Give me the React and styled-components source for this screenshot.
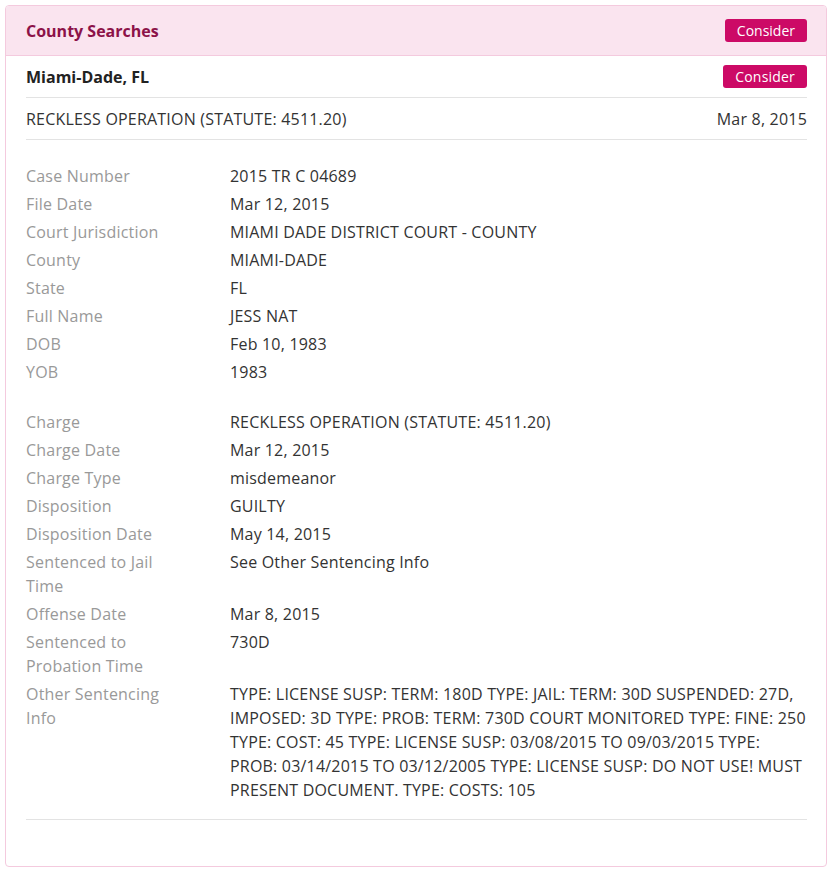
import React from "react";
import styled, { createGlobalStyle } from "styled-components";

const GlobalStyle = createGlobalStyle`
  body {
    margin: 0;
    padding: 5px;
    background: #fff;
    font-family: "Open Sans", "Noto Sans", sans-serif;
    color: #333;
  }
  * { box-sizing: border-box; }
`;

const general = [
  ["Case Number", "2015 TR C 04689"],
  ["File Date", "Mar 12, 2015"],
  ["Court Jurisdiction", "MIAMI DADE DISTRICT COURT - COUNTY"],
  ["County", "MIAMI-DADE"],
  ["State", "FL"],
  ["Full Name", "JESS NAT"],
  ["DOB", "Feb 10, 1983"],
  ["YOB", "1983"],
];

const charge = [
  ["Charge", "RECKLESS OPERATION (STATUTE: 4511.20)"],
  ["Charge Date", "Mar 12, 2015"],
  ["Charge Type", "misdemeanor"],
  ["Disposition", "GUILTY"],
  ["Disposition Date", "May 14, 2015"],
  ["Sentenced to Jail Time", "See Other Sentencing Info"],
  ["Offense Date", "Mar 8, 2015"],
  ["Sentenced to Probation Time", "730D"],
  [
    "Other Sentencing Info",
    "TYPE: LICENSE SUSP: TERM: 180D TYPE: JAIL: TERM: 30D SUSPENDED: 27D, IMPOSED: 3D TYPE: PROB: TERM: 730D COURT MONITORED TYPE: FINE: 250 TYPE: COST: 45 TYPE: LICENSE SUSP: 03/08/2015 TO 09/03/2015 TYPE: PROB: 03/14/2015 TO 03/12/2005 TYPE: LICENSE SUSP: DO NOT USE! MUST PRESENT DOCUMENT. TYPE: COSTS: 105",
  ],
];

const App = () => {
  return (
    <>
      <GlobalStyle />
      <Card>
        <Header>
          <Title>County Searches</Title>
          <Badge>Consider</Badge>
        </Header>
        <Body>
          <Row>
            <County>Miami-Dade, FL</County>
            <Badge>Consider</Badge>
          </Row>
          <Row>
            <span>RECKLESS OPERATION (STATUTE: 4511.20)</span>
            <span>Mar 8, 2015</span>
          </Row>
          <Details>
            <Group>
              {general.map(([k, v]) => (
                <Item key={k}>
                  <Label>{k}</Label>
                  <Value>{v}</Value>
                </Item>
              ))}
            </Group>
            <Group>
              {charge.map(([k, v]) => (
                <Item key={k}>
                  <Label>{k}</Label>
                  <Value>{v}</Value>
                </Item>
              ))}
            </Group>
          </Details>
        </Body>
      </Card>
    </>
  );
};

export default App;

const Card = styled.div`
  width: 822px;
  height: 862px;
  border: 1px solid #f4cade;
  border-radius: 4px;
  overflow: hidden;
  background: #fff;
`;

const Header = styled.div`
  height: 50px;
  display: flex;
  align-items: center;
  justify-content: space-between;
  padding: 0 19px 0 20px;
  background: #fae4ef;
  border-bottom: 1px solid #f4cade;
`;

const Title = styled.h2`
  margin: 0;
  font-size: 16px;
  font-weight: 700;
  color: #8c1248;
`;

const Badge = styled.span`
  display: inline-flex;
  align-items: center;
  height: 23px;
  padding: 0 12px;
  border-radius: 3px;
  background: #cc0a66;
  color: #fff;
  font-size: 14px;
`;

const Body = styled.div`
  padding: 0 19px 0 20px;
`;

const Row = styled.div`
  height: 42px;
  display: flex;
  align-items: center;
  justify-content: space-between;
  border-bottom: 1px solid #e3e3e3;
  font-size: 16px;
  letter-spacing: 0.2px;
  color: #333;
`;

const County = styled.span`
  font-weight: 700;
  letter-spacing: 0;
  color: #222;
`;

const Details = styled.div`
  padding: 24px 0 17px;
  border-bottom: 1px solid #e3e3e3;
  display: flex;
  flex-direction: column;
  gap: 26px;
`;

const Group = styled.div`
  display: flex;
  flex-direction: column;
  gap: 4px;
`;

const Item = styled.div`
  display: grid;
  grid-template-columns: 204px 1fr;
  font-size: 16px;
  line-height: 24px;
  letter-spacing: 0.2px;
`;

const Label = styled.div`
  color: #999;
  max-width: 158px;
`;

const Value = styled.div`
  color: #333;
`;
